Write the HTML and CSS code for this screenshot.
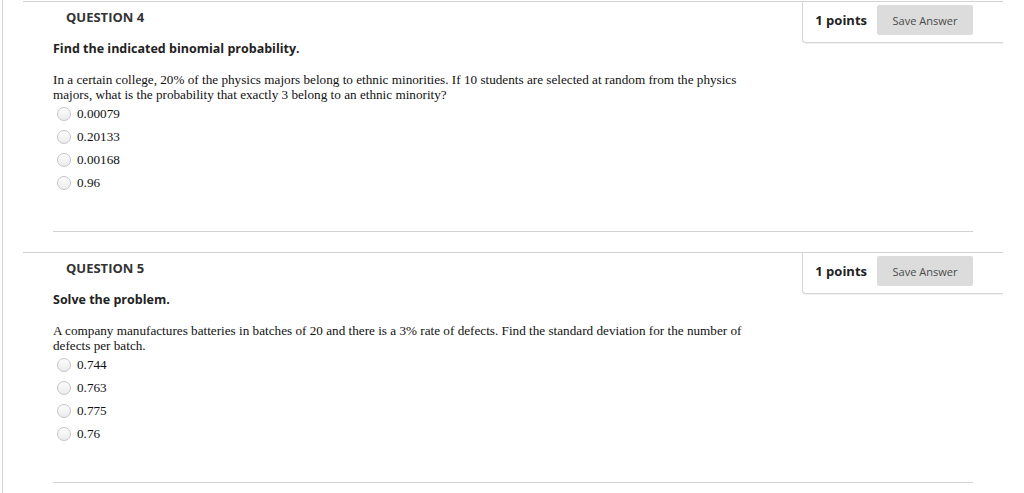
FILE: index.html
```html
<!DOCTYPE html>
<html>
<head>
<meta charset="utf-8">
<link rel="stylesheet" href="styles.css">
</head>
<body>
<div class="page">
  <div class="question">
    <div class="q-head">
      <h3 class="q-title">QUESTION 4</h3>
      <div class="points-box">
        <span class="points">1 points</span>
        <button class="save-btn">Save Answer</button>
      </div>
    </div>
    <div class="q-body">
      <h4 class="q-instr">Find the indicated binomial probability.</h4>
      <p class="q-text">In a certain college, 20% of the physics majors belong to ethnic minorities. If 10 students are selected at random from the physics majors, what is the probability that exactly 3 belong to an ethnic minority?</p>
      <ul class="options">
        <li class="option"><span class="radio"></span><span>0.00079</span></li>
        <li class="option"><span class="radio"></span><span>0.20133</span></li>
        <li class="option"><span class="radio"></span><span>0.00168</span></li>
        <li class="option"><span class="radio"></span><span>0.96</span></li>
      </ul>
      <div class="sep"></div>
    </div>
  </div>
  <div class="question">
    <div class="q-head">
      <h3 class="q-title">QUESTION 5</h3>
      <div class="points-box">
        <span class="points">1 points</span>
        <button class="save-btn">Save Answer</button>
      </div>
    </div>
    <div class="q-body">
      <h4 class="q-instr">Solve the problem.</h4>
      <p class="q-text">A company manufactures batteries in batches of 20 and there is a 3% rate of defects. Find the standard deviation for the number of defects per batch.</p>
      <ul class="options">
        <li class="option"><span class="radio"></span><span>0.744</span></li>
        <li class="option"><span class="radio"></span><span>0.763</span></li>
        <li class="option"><span class="radio"></span><span>0.775</span></li>
        <li class="option"><span class="radio"></span><span>0.76</span></li>
      </ul>
      <div class="sep"></div>
    </div>
  </div>
</div>
</body>
</html>
```

FILE: styles.css
```css
html, body {
  margin: 0;
  padding: 0;
  background: #fff;
}
body {
  font-family: "Open Sans", "Liberation Sans", sans-serif;
  color: #333;
  overflow: hidden;
}
.page {
  margin-left: 2px;
  border-left: 1px solid #d4d4d4;
  min-height: 493px;
  padding: 1px 0 0 20px;
  box-sizing: border-box;
}
.question {
  width: 980px;
  border-top: 1px solid #d2d2d2;
  margin-bottom: 20px;
}
.q-head {
  display: flex;
  justify-content: space-between;
  align-items: flex-start;
  height: 26px;
}
.q-title {
  margin: 0;
  padding: 6px 0 0 43px;
  font-size: 13px;
  line-height: 18px;
  font-weight: 700;
  color: #333;
}
.points-box {
  display: flex;
  align-items: flex-start;
  gap: 10px;
  height: 37px;
  padding: 3px 30px 0 12px;
  border-left: 1px solid #d6d6d6;
  border-bottom: 1px solid #d6d6d6;
  border-bottom-left-radius: 4px;
  box-shadow: 0 1px 1px rgba(0, 0, 0, 0.06);
  background: #fff;
  position: relative;
  z-index: 1;
}
.points {
  font-size: 13px;
  line-height: 30px;
  font-weight: 700;
  color: #222;
}
.save-btn {
  font-family: "Open Sans", "Liberation Sans", sans-serif;
  font-size: 11px;
  color: #4a4a4a;
  background: #dcdcdc;
  border: none;
  border-radius: 2px;
  width: 96px;
  height: 30px;
  padding: 0;
}
.q-body {
  padding: 0 30px;
}
.q-instr {
  margin: 12px 0 0;
  font-size: 12.5px;
  line-height: 18px;
  font-weight: 700;
  color: #222;
}
.q-text {
  margin: 14px 0 0;
  max-width: 712px;
  font-family: "Liberation Serif", "Times New Roman", serif;
  font-size: 13.2px;
  line-height: 15px;
  color: #111;
}
.options {
  list-style: none;
  margin: 0;
  padding: 0;
}
.option {
  display: flex;
  align-items: center;
  gap: 6px;
  height: 23px;
  padding-left: 4px;
  font-family: "Liberation Serif", "Times New Roman", serif;
  font-size: 13.2px;
  color: #111;
}
.radio {
  width: 12px;
  height: 12px;
  border: 1px solid #c4c4c4;
  border-radius: 50%;
  background: linear-gradient(#fdfdfd, #ececec);
  box-sizing: content-box;
}
.sep {
  margin-top: 37px;
  border-top: 1px solid #d2d2d2;
}
```
